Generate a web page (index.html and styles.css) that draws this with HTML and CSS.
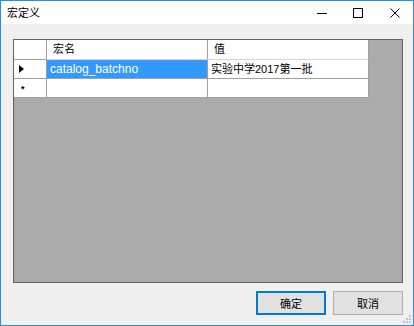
FILE: index.html
```html
<!DOCTYPE html>
<html lang="zh-CN">
<head>
    <meta charset="UTF-8">
    <title>宏定义</title>
    <link rel="stylesheet" href="styles.css">
</head>
<body>
    <div class="window">
        <!-- Title bar -->
        <div class="titlebar">
            <span class="title">宏定义</span>
            <div class="caption-buttons">
                <span class="cap-btn">
                    <svg width="10" height="10" viewBox="0 0 10 10"><line x1="0" y1="5.5" x2="10" y2="5.5" stroke="#000" stroke-width="1"/></svg>
                </span>
                <span class="cap-btn">
                    <svg width="10" height="10" viewBox="0 0 10 10"><rect x="0.5" y="0.5" width="9" height="9" fill="none" stroke="#000" stroke-width="1"/></svg>
                </span>
                <span class="cap-btn">
                    <svg width="10" height="10" viewBox="0 0 10 10"><path d="M0.5 0.5 L9.5 9.5 M9.5 0.5 L0.5 9.5" stroke="#000" stroke-width="1"/></svg>
                </span>
            </div>
        </div>

        <div class="client">
            <!-- Data grid -->
            <div class="grid-view">
                <div class="grid-table">
                    <div class="cell row-head"></div>
                    <div class="cell col-head">宏名</div>
                    <div class="cell col-head">值</div>

                    <div class="cell row-head">
                        <svg width="5" height="8" viewBox="0 0 5 8"><path d="M0 0 L5 4 L0 8 Z" fill="#000"/></svg>
                    </div>
                    <div class="cell selected latin">catalog_batchno</div>
                    <div class="cell">实验中学2017第一批</div>

                    <div class="cell row-head star">*</div>
                    <div class="cell"></div>
                    <div class="cell"></div>
                </div>
            </div>

            <!-- Buttons -->
            <div class="button-row">
                <button class="btn btn-default">确定</button>
                <button class="btn">取消</button>
            </div>
        </div>

        <svg class="grip" width="8" height="8" viewBox="0 0 8 8">
            <rect x="6" y="0" width="2" height="2" fill="#c4c4c4"/>
            <rect x="3" y="3" width="2" height="2" fill="#c4c4c4"/>
            <rect x="6" y="3" width="2" height="2" fill="#c4c4c4"/>
            <rect x="0" y="6" width="2" height="2" fill="#c4c4c4"/>
            <rect x="3" y="6" width="2" height="2" fill="#c4c4c4"/>
            <rect x="6" y="6" width="2" height="2" fill="#c4c4c4"/>
        </svg>
    </div>
</body>
</html>
```

FILE: styles.css
```css
:root {
    --accent: #2b8fd6;
    --face: #f0f0f0;
    --grid-line: #a0a0a0;
    --grid-bg: #ababab;
    --select: #3399ff;
}

* {
    box-sizing: border-box;
}

body {
    margin: 0;
    font-family: "Liberation Sans", "Noto Sans CJK SC", sans-serif;
    font-size: 11px;
    color: #000;
}

.window {
    width: 414px;
    height: 326px;
    border: 1px solid var(--accent);
    background: var(--face);
    display: flex;
    flex-direction: column;
    position: relative;
}

.titlebar {
    height: 23px;
    background: #fff;
    display: flex;
    align-items: center;
    justify-content: space-between;
    padding-left: 6px;
}

.title {
    line-height: 1;
    padding-top: 1px;
}

.caption-buttons {
    display: flex;
    height: 100%;
}

.cap-btn {
    width: 37px;
    height: 100%;
    display: flex;
    align-items: center;
    justify-content: center;
}

.cap-btn:first-child {
    padding-left: 2px;
}

.client {
    flex: 1;
    padding: 15px 10px 10px 12px;
    display: flex;
    flex-direction: column;
}

/* Data grid */
.grid-view {
    height: 244px;
    border: 1px solid #646464;
    background: var(--grid-bg);
}

.grid-table {
    display: grid;
    grid-template-columns: 33px 161px 161px;
    grid-template-rows: 20px 19px 19px;
    width: max-content;
}

.cell {
    background: #fff;
    border-right: 1px solid var(--grid-line);
    border-bottom: 1px solid var(--grid-line);
    padding: 0 3px;
    display: flex;
    align-items: center;
    white-space: nowrap;
    line-height: 1;
}

.latin {
    font-size: 12px;
}

.col-head {
    border-bottom-color: #d5d5d5;
    padding-left: 6px;
}

.row-head {
    justify-content: flex-start;
    padding-left: 5px;
}

.star {
    font-size: 9px;
    font-weight: bold;
    padding-left: 7px;
    padding-top: 3px;
}

.selected {
    background: var(--select);
    color: #fff;
}

/* Buttons */
.button-row {
    display: flex;
    justify-content: flex-end;
    gap: 7px;
    margin-top: 8px;
}

.btn {
    width: 70px;
    height: 24px;
    background: #e1e1e1;
    border: 1px solid #adadad;
    font-family: inherit;
    font-size: 11px;
    padding: 0;
    margin: 0;
    color: #000;
}

.btn-default {
    border: 2px solid #0078d7;
}

.grip {
    position: absolute;
    right: 2px;
    bottom: 2px;
}
```
